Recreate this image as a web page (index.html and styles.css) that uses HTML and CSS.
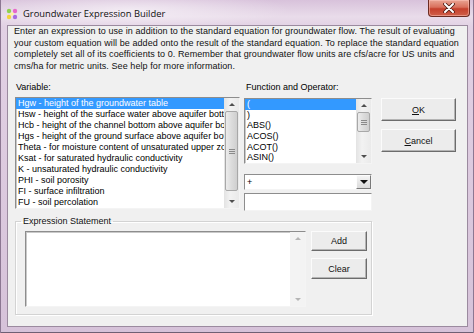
FILE: index.html
```html
<!DOCTYPE html>
<html lang="en">
<head>
    <meta charset="UTF-8">
    <title>Groundwater Expression Builder</title>
    <link rel="stylesheet" href="styles.css">
</head>
<body>
    <div class="window">
        <div class="titlebar">
            <svg class="app-icon" width="12" height="12" viewBox="0 0 12 12">
                <circle cx="3" cy="3" r="2.2" fill="#8fd14f"/>
                <circle cx="9" cy="3" r="2.2" fill="#e868c8"/>
                <circle cx="3" cy="9" r="2.2" fill="#f2d33c"/>
                <circle cx="9" cy="9" r="2.2" fill="#a86be0"/>
                <circle cx="6" cy="6" r="1.8" fill="#fff6a0"/>
            </svg>
            <span class="title">Groundwater Expression Builder</span>
            <div class="close-btn">
                <svg width="14" height="10" viewBox="0 0 14 10">
                    <path d="M3 1 L11 9 M11 1 L3 9" stroke="#4b1a12" stroke-width="3.6" stroke-linecap="round"/>
                    <path d="M3 1 L11 9 M11 1 L3 9" stroke="#ffffff" stroke-width="2" stroke-linecap="round"/>
                </svg>
            </div>
        </div>

        <div class="client">
            <p class="intro">
                Enter an expression to use in addition to the standard equation for groundwater flow. The result of evaluating<br>
                your custom equation will be added onto the result of the standard equation. To replace the standard equation<br>
                completely set all of its coefficients to 0. Remember that groundwater flow units are cfs/acre for US units and<br>
                cms/ha for metric units. See help for more information.
            </p>

            <div class="main">
                <div class="left">
                    <div class="pickers">
                        <div class="var-col">
                            <div class="label">Variable:</div>
                            <div class="listbox var-list">
                                <ul class="items">
                                    <li class="selected">Hgw - height of the groundwater table</li>
                                    <li>Hsw - height of the surface water above aquifer bottom</li>
                                    <li>Hcb - height of the channel bottom above aquifer bottom</li>
                                    <li>Hgs - height of the ground surface above aquifer bottom</li>
                                    <li>Theta - for moisture content of unsaturated upper zone</li>
                                    <li>Ksat - for saturated hydraulic conductivity</li>
                                    <li>K - unsaturated hydraulic conductivity</li>
                                    <li>PHI - soil porosity</li>
                                    <li>FI - surface infiltration</li>
                                    <li>FU - soil percolation</li>
                                </ul>
                                <div class="vscroll">
                                    <div class="arrow up"></div>
                                    <div class="track">
                                        <div class="thumb var-thumb"><span class="grip"></span></div>
                                    </div>
                                    <div class="arrow down"></div>
                                </div>
                            </div>
                        </div>

                        <div class="func-col">
                            <div class="label">Function and Operator:</div>
                            <div class="listbox func-list">
                                <ul class="items">
                                    <li class="selected">(</li>
                                    <li>)</li>
                                    <li>ABS()</li>
                                    <li>ACOS()</li>
                                    <li>ACOT()</li>
                                    <li>ASIN()</li>
                                </ul>
                                <div class="vscroll">
                                    <div class="arrow up"></div>
                                    <div class="track">
                                        <div class="thumb func-thumb"><span class="grip"></span></div>
                                    </div>
                                    <div class="arrow down"></div>
                                </div>
                            </div>
                            <div class="combo">
                                <span class="combo-value">+</span>
                                <span class="combo-btn"><span class="combo-arrow"></span></span>
                            </div>
                            <div class="textbox"></div>
                        </div>
                    </div>

                    <fieldset class="group">
                        <legend>Expression Statement</legend>
                        <div class="group-body">
                            <div class="textarea">
                                <div class="textarea-text"></div>
                                <div class="vscroll disabled">
                                    <div class="arrow up"></div>
                                    <div class="track"></div>
                                    <div class="arrow down"></div>
                                </div>
                            </div>
                            <div class="group-btns">
                                <button class="btn btn-small">Add</button>
                                <button class="btn btn-small btn-clear">Clear</button>
                            </div>
                        </div>
                    </fieldset>
                </div>

                <div class="side-btns">
                    <button class="btn btn-big"><u>O</u>K</button>
                    <button class="btn btn-big btn-cancel"><u>C</u>ancel</button>
                </div>
            </div>
        </div>
    </div>
</body>
</html>
```

FILE: styles.css
```css
* {
    margin: 0;
    padding: 0;
    box-sizing: border-box;
}

html, body {
    width: 474px;
    height: 333px;
    overflow: hidden;
}

body {
    font-family: 'Liberation Sans', Arial, sans-serif;
    font-size: 9px;
    color: #000;
    background: #cdb9d1;
}

/* window frame */
.window {
    width: 474px;
    height: 333px;
    display: flex;
    flex-direction: column;
    padding: 0 6px 6px 7px;
    background:
        radial-gradient(ellipse 160px 20px at 130px 10px, rgba(255, 255, 255, 0.55), rgba(255, 255, 255, 0) 100%),
        linear-gradient(180deg, #d8c2db 0%, #e9dcea 5%, #e2d1e4 8%, #d6c2d9 100%);
    box-shadow: inset 1px 0 #8c7792, inset -1px 0 #8c7792, inset 0 -1px #6f5f74;
}

.titlebar {
    height: 25px;
    display: flex;
    align-items: center;
}

.app-icon {
    margin-left: -1px;
    margin-top: 2px;
}

.title {
    margin-left: 5px;
    margin-top: 2px;
    font-family: 'Open Sans', 'Liberation Sans', sans-serif;
    font-size: 9.4px;
    color: #111;
}

.close-btn {
    margin-left: auto;
    margin-right: -2px;
    align-self: flex-start;
    width: 42px;
    height: 17px;
    display: flex;
    align-items: center;
    justify-content: center;
    border: 1px solid #6b2b22;
    border-top: none;
    border-radius: 0 0 4px 4px;
    background: linear-gradient(180deg, #e9a493 0%, #d9705c 45%, #c5402c 55%, #d0604a 100%);
    box-shadow: inset 0 0 0 1px rgba(255, 200, 190, 0.5);
}

.client {
    flex: 1;
    background: #f0f0f0;
    border: 1px solid #9b8a9f;
}

.intro {
    line-height: 11.5px;
    letter-spacing: 0.08px;
    padding-left: 6px;
    white-space: nowrap;
    color: #111;
}

/* main area */
.main {
    display: flex;
    margin-top: 9px;
    padding-left: 7px;
}

.left {
    width: 357px;
}

.pickers {
    display: flex;
}

.label {
    height: 12px;
    line-height: 12px;
    padding-left: 1px;
}

.var-col {
    width: 225px;
}

.func-col {
    width: 128px;
    margin-left: 4px;
}

.func-col .label {
    padding-left: 2px;
}

.listbox {
    display: flex;
    background: #fff;
    border: 1px solid;
    border-color: #8d8d8d #f4f4f4 #f4f4f4 #8d8d8d;
    box-shadow: inset 1px 1px #c9c9c9;
    overflow: hidden;
}

.var-list {
    margin-top: 4px;
    height: 112px;
}

.func-list {
    margin-top: 5px;
    height: 66px;
}

.items {
    list-style: none;
    flex: 1;
    min-width: 0;
    overflow: hidden;
}

.items li {
    height: 11px;
    line-height: 11px;
    padding-left: 2px;
    white-space: nowrap;
    overflow: hidden;
}

.func-list .items li {
    height: 10.7px;
    line-height: 10.7px;
}

.items li.selected {
    background: #3399ff;
    color: #fff;
}

/* scrollbars */
.vscroll {
    width: 15px;
    display: flex;
    flex-direction: column;
    background: linear-gradient(90deg, #e3e3e3, #f2f2f2 40%, #eaeaea);
}

.arrow {
    height: 13px;
    display: flex;
    align-items: center;
    justify-content: center;
}

.arrow::before {
    content: '';
    border-left: 3px solid transparent;
    border-right: 3px solid transparent;
}

.arrow.up::before {
    border-bottom: 3px solid #4f4f4f;
}

.arrow.down::before {
    border-top: 3px solid #4f4f4f;
}

.track {
    flex: 1;
}

.thumb {
    margin: 0 1px;
    display: flex;
    align-items: center;
    justify-content: center;
    border: 1px solid #a8a8a8;
    border-radius: 2px;
    background: linear-gradient(90deg, #ececec, #dcdcdc 50%, #cfcfcf);
}

.var-thumb {
    height: 80px;
}

.func-thumb {
    height: 20px;
}

.grip {
    width: 6px;
    height: 5px;
    border-top: 1px solid #8a8a8a;
    border-bottom: 1px solid #8a8a8a;
    background: linear-gradient(180deg, transparent 1px, #8a8a8a 1px, #8a8a8a 2px, transparent 2px);
}

.vscroll.disabled {
    background: #f3f3f3;
}

.vscroll.disabled .arrow.up::before {
    border-bottom-color: #b5b5b5;
}

.vscroll.disabled .arrow.down::before {
    border-top-color: #b5b5b5;
}

/* combo and text box */
.combo {
    margin-top: 10px;
    height: 16px;
    display: flex;
    background: #fff;
    border: 1px solid;
    border-color: #8d8d8d #f4f4f4 #f4f4f4 #8d8d8d;
}

.combo-value {
    flex: 1;
    line-height: 14px;
    padding-left: 2px;
}

.combo-btn {
    width: 15px;
    display: flex;
    align-items: center;
    justify-content: center;
    background: linear-gradient(180deg, #f4f4f4, #dadada);
    border: 1px solid;
    border-color: #fdfdfd #7a7a7a #7a7a7a #fdfdfd;
}

.combo-arrow {
    border-left: 4px solid transparent;
    border-right: 4px solid transparent;
    border-top: 4px solid #111;
}

.textbox {
    margin-top: 3px;
    height: 18px;
    background: #fff;
    border: 1px solid;
    border-color: #8d8d8d #f4f4f4 #f4f4f4 #8d8d8d;
}

/* expression group */
.group {
    margin-top: 4px;
    height: 100px;
    border: 1px solid #d3d3d3;
    box-shadow: 1px 1px #fff, inset 1px 1px #fff;
    padding: 4px 4px 7px 9px;
}

.group legend {
    margin-left: -4px;
    padding: 0 2px;
    line-height: 12px;
    color: #111;
}

.group-body {
    display: flex;
}

.textarea {
    width: 281px;
    height: 76px;
    display: flex;
    background: #fff;
    border: 1px solid;
    border-color: #8d8d8d #f4f4f4 #f4f4f4 #8d8d8d;
    box-shadow: inset 1px 1px #c9c9c9;
}

.textarea-text {
    flex: 1;
}

.group-btns {
    margin-left: 5px;
    display: flex;
    flex-direction: column;
}

/* buttons */
.btn {
    font-family: 'Liberation Sans', Arial, sans-serif;
    font-size: 9px;
    color: #111;
    background: #ececec;
    border: 1px solid;
    border-color: #fbfbfb #6c6c6c #6c6c6c #fbfbfb;
    box-shadow: inset -1px -1px #b4b4b4;
}

.btn u {
    text-decoration: underline;
}

.btn-small {
    width: 56px;
    height: 20px;
}

.btn-clear {
    margin-top: 7px;
    height: 21px;
}

.side-btns {
    margin-left: 9px;
    padding-top: 17px;
    display: flex;
    flex-direction: column;
}

.btn-big {
    width: 75px;
    height: 23px;
}

.btn-cancel {
    margin-top: 8px;
}
```
